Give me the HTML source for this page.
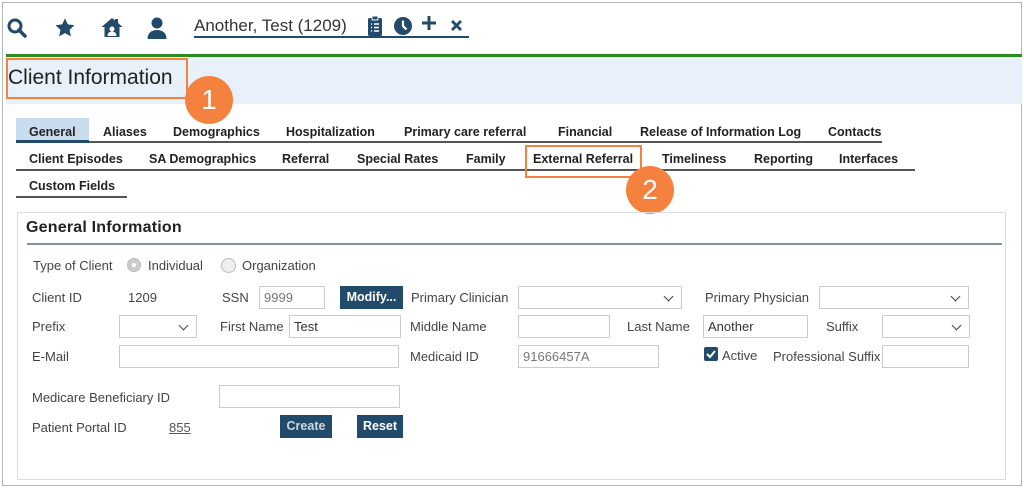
<!DOCTYPE html>
<html><head><meta charset="utf-8"><style>
*{margin:0;padding:0;box-sizing:border-box}
body{width:1024px;height:489px;background:#fff;position:relative;overflow:hidden;font-family:"Liberation Sans",sans-serif;color:#333}
.a{position:absolute;white-space:nowrap}
.frame{left:2px;top:2px;width:1020px;height:484px;border:1px solid #b5b5b5}
.tab{position:absolute;font-size:12.5px;font-weight:bold;color:#222}
.line{position:absolute;height:2px;background:#555}
.lbl{position:absolute;font-size:13px;color:#444;white-space:nowrap}
.in{position:absolute;border:1px solid #ccc;background:#fff;height:23px;font-size:13px;padding:3px 4px;color:#333}
.sel::after{content:"";position:absolute;right:9px;top:6px;width:6px;height:6px;border-right:1.5px solid #444;border-bottom:1.5px solid #444;transform:rotate(45deg)}
.btn{position:absolute;background:#214a6b;color:#fff;font-size:12.5px;font-weight:bold;text-align:center;height:23px;line-height:23px}
.circ{position:absolute;width:48px;height:48px;border-radius:50%;background:#f5813f;color:#fff;font-size:28px;text-align:center;line-height:48px}
</style></head><body>
<div class="a frame"></div>
<svg class="a" style="left:6px;top:17px" width="22" height="22" viewBox="0 0 22 22"><circle cx="9" cy="9" r="6" fill="none" stroke="#214a6b" stroke-width="3"/><path d="M13 13l6 6" stroke="#214a6b" stroke-width="3.5" stroke-linecap="round"/></svg>
<svg class="a" style="left:54px;top:17px" width="22" height="22" viewBox="0 0 24 24"><path d="M12 1.5l3.1 6.6 7.2.9-5.3 5 1.4 7.1L12 17.6 5.6 21.1 7 14l-5.3-5 7.2-.9z" fill="#214a6b"/></svg>
<svg class="a" style="left:100px;top:16px" width="24" height="24" viewBox="0 0 24 24"><path d="M12 2L1.5 11h3v10h15V11h3L18 7V3h-3v1.5z" fill="#214a6b"/><circle cx="12" cy="13" r="2.5" fill="#fff"/><path d="M7.5 20c0-3 2-4.5 4.5-4.5s4.5 1.5 4.5 4.5z" fill="#fff"/></svg>
<svg class="a" style="left:146px;top:16px" width="22" height="24" viewBox="0 0 22 24"><circle cx="11" cy="7" r="5.5" fill="#214a6b"/><path d="M1.5 23c0-6 4-9 9.5-9s9.5 3 9.5 9z" fill="#214a6b"/></svg>
<div class="a" style="left:194px;top:16px;font-size:17px;color:#333">Another, Test (1209)</div>
<svg class="a" style="left:367px;top:15px" width="16" height="22" viewBox="0 0 16 22"><rect x="1" y="3" width="14" height="18" rx="1.5" fill="#214a6b"/><rect x="5" y="1" width="6" height="4" rx="1" fill="#214a6b" stroke="#fff" stroke-width="1"/><path d="M4 9h1M7 9h5M4 12.5h1M7 12.5h5M4 16h1M7 16h5" stroke="#fff" stroke-width="1.5"/></svg>
<svg class="a" style="left:393px;top:16px" width="20" height="20" viewBox="0 0 20 20"><circle cx="10" cy="10" r="9" fill="#214a6b"/><path d="M10 4.5V10l3.5 3.5" stroke="#fff" stroke-width="2.2" fill="none"/></svg>
<svg class="a" style="left:421px;top:15px" width="16" height="16" viewBox="0 0 16 16"><path d="M8 1v14M1 8h14" stroke="#214a6b" stroke-width="3"/></svg>
<svg class="a" style="left:450px;top:19px" width="13" height="13" viewBox="0 0 13 13"><path d="M2 2l9 9M11 2l-9 9" stroke="#214a6b" stroke-width="2.8"/></svg>
<div class="a" style="left:194px;top:36px;width:275px;height:2px;background:#214a6b"></div>
<div class="a" style="left:6px;top:54px;width:1016px;height:3px;background:#2e8b22"></div>
<div class="a" style="left:6px;top:57px;width:1016px;height:47px;background:#e8f1f9"></div>
<div class="a" style="left:6px;top:58px;width:182px;height:41px;border:2px solid #f5813f"></div>
<div class="a" style="left:8px;top:66px;font-size:21px;color:#222">Client Information</div>
<div class="circ" style="left:185px;top:76px">1</div>
<div class="a" style="left:16px;top:118px;width:73px;height:24px;background:#c8dcee"></div>
<div class="line" style="left:16px;top:141px;width:866px;background:#555"></div>
<div class="a" style="left:16px;top:140px;width:73px;height:3px;background:#214a6b"></div>
<div class="tab" style="left:29px;top:125px">General</div>
<div class="tab" style="left:103px;top:125px">Aliases</div>
<div class="tab" style="left:173px;top:125px">Demographics</div>
<div class="tab" style="left:286px;top:125px">Hospitalization</div>
<div class="tab" style="left:404px;top:125px">Primary care referral</div>
<div class="tab" style="left:558px;top:125px">Financial</div>
<div class="tab" style="left:640px;top:125px">Release of Information Log</div>
<div class="tab" style="left:828px;top:125px">Contacts</div>
<div class="line" style="left:16px;top:169px;width:899px"></div>
<div class="tab" style="left:29px;top:152px">Client Episodes</div>
<div class="tab" style="left:149px;top:152px">SA Demographics</div>
<div class="tab" style="left:282px;top:152px">Referral</div>
<div class="tab" style="left:357px;top:152px">Special Rates</div>
<div class="tab" style="left:466px;top:152px">Family</div>
<div class="tab" style="left:533px;top:152px">External Referral</div>
<div class="tab" style="left:662px;top:152px">Timeliness</div>
<div class="tab" style="left:754px;top:152px">Reporting</div>
<div class="tab" style="left:839px;top:152px">Interfaces</div>
<div class="a" style="left:525px;top:145px;width:117px;height:33px;border:2px solid #f5813f"></div>
<div class="circ" style="left:626px;top:166px">2</div>
<div class="line" style="left:16px;top:196px;width:111px"></div>
<div class="tab" style="left:29px;top:179px">Custom Fields</div>
<div class="a" style="left:17px;top:212px;width:989px;height:268px;border:1px solid #ddd"></div>
<div class="a" style="left:26px;top:219px;font-size:16px;color:#222;font-weight:bold;letter-spacing:.2px">General Information</div>
<div class="a" style="left:27px;top:243px;width:975px;height:2px;background:#7d92a5"></div>
<div class="lbl" style="left:33px;top:258px">Type of Client</div>
<div class="a" style="left:127px;top:258px;width:14px;height:14px;border-radius:50%;background:#ccc;border:1px solid #bbb"></div>
<div class="a" style="left:132px;top:263px;width:4px;height:4px;border-radius:50%;background:#fff"></div>
<div class="lbl" style="left:148px;top:258px">Individual</div>
<div class="a" style="left:221px;top:258px;width:15px;height:15px;border-radius:50%;border:1px solid #bbb;background:#eee"></div>
<div class="lbl" style="left:242px;top:258px">Organization</div>
<div class="lbl" style="left:32px;top:290px">Client ID</div>
<div class="lbl" style="left:128px;top:290px">1209</div>
<div class="lbl" style="left:222px;top:290px">SSN</div>
<div class="in" style="left:259px;top:286px;width:66px;color:#777">9999</div>
<div class="btn" style="left:340px;top:286px;width:63px">Modify...</div>
<div class="lbl" style="left:411px;top:290px">Primary Clinician</div>
<div class="in sel" style="left:518px;top:286px;width:164px"></div>
<div class="lbl" style="left:705px;top:290px">Primary Physician</div>
<div class="in sel" style="left:819px;top:286px;width:150px"></div>
<div class="lbl" style="left:32px;top:319px">Prefix</div>
<div class="in sel" style="left:119px;top:315px;width:78px"></div>
<div class="lbl" style="left:220px;top:319px">First Name</div>
<div class="in" style="left:289px;top:315px;width:112px">Test</div>
<div class="lbl" style="left:410px;top:319px">Middle Name</div>
<div class="in" style="left:518px;top:315px;width:92px"></div>
<div class="lbl" style="left:627px;top:319px">Last Name</div>
<div class="in" style="left:703px;top:315px;width:105px">Another</div>
<div class="lbl" style="left:826px;top:319px">Suffix</div>
<div class="in sel" style="left:882px;top:315px;width:88px"></div>
<div class="lbl" style="left:32px;top:349px">E-Mail</div>
<div class="in" style="left:119px;top:345px;width:280px"></div>
<div class="lbl" style="left:410px;top:349px">Medicaid ID</div>
<div class="in" style="left:518px;top:345px;width:141px;color:#777">91666457A</div>
<div class="a" style="left:704px;top:347px;width:14px;height:14px;background:#214a6b;border-radius:2px"></div>
<svg class="a" style="left:705px;top:348px" width="12" height="12" viewBox="0 0 12 12"><path d="M2 6l3 3 5-6" stroke="#fff" stroke-width="2" fill="none"/></svg>
<div class="lbl" style="left:722px;top:348px">Active</div>
<div class="lbl" style="left:773px;top:349px">Professional Suffix</div>
<div class="in" style="left:882px;top:345px;width:87px"></div>
<div class="lbl" style="left:32px;top:390px">Medicare Beneficiary ID</div>
<div class="in" style="left:219px;top:385px;width:181px"></div>
<div class="lbl" style="left:32px;top:420px">Patient Portal ID</div>
<div class="lbl" style="left:169px;top:420px;color:#555;text-decoration:underline">855</div>
<div class="btn" style="left:280px;top:415px;width:52px;color:#cfd8e0">Create</div>
<div class="btn" style="left:357px;top:415px;width:46px">Reset</div>
</body></html>
